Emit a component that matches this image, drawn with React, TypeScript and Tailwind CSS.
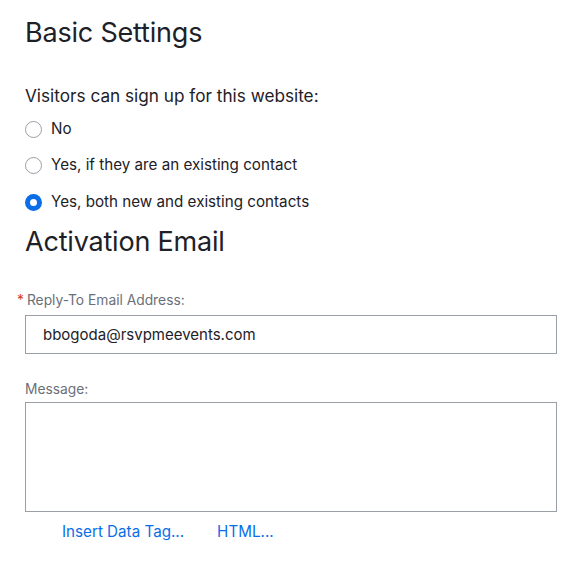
import { useState } from 'react'

const options = [
  'No',
  'Yes, if they are an existing contact',
  'Yes, both new and existing contacts',
]

export default function App() {
  const [signup, setSignup] = useState(2)
  const [email, setEmail] = useState('bbogoda@rsvpmeevents.com')

  return (
    <div className="min-h-screen bg-white px-[25px] pt-[14px] text-[#1d2127] font-['Inter',sans-serif]">
      <h2 className="text-[27px] leading-[38px] tracking-[-0.2px]">Basic Settings</h2>

      <div className="mt-[32px] text-[17.2px] leading-[24px]">Visitors can sign up for this website:</div>

      <div className="mt-[3px] flex flex-col">
        {options.map((label, i) => (
          <label key={i} className="flex h-[36.5px] cursor-pointer items-center gap-[9px] text-[15.2px]">
            <span
              className={
                i === signup
                  ? 'h-[17px] w-[17px] rounded-full border-[5px] border-[#0a6ee8] bg-white'
                  : 'h-[17px] w-[17px] rounded-full border border-[#9aa0a8] bg-white'
              }
              onClick={() => setSignup(i)}
            />
            <span>{label}</span>
          </label>
        ))}
      </div>

      <h2 className="mt-[2px] text-[27px] leading-[38px] tracking-[-0.2px]">Activation Email</h2>

      <div className="mt-[29px] flex items-center text-[13.8px] text-[#6b7079]">
        <span className="-ml-[8px] mr-[3px] text-[#d93a12]">*</span>
        Reply-To Email Address:
      </div>
      <input
        value={email}
        onChange={(e) => setEmail(e.target.value)}
        className="mt-[5px] block h-[39px] w-[532px] border border-[#9ba0a7] px-[17px] text-[15px] text-[#1d2127] outline-none"
      />

      <div className="mt-[25px] text-[13.8px] text-[#6b7079]">Message:</div>
      <textarea className="mt-[2px] block h-[110px] w-[532px] resize-none border border-[#9ba0a7] p-2 outline-none" />

      <div className="mt-[9px] flex gap-[33px] pl-[37px] text-[15.2px] text-[#0a6ee8]">
        <a href="#">Insert Data Tag...</a>
        <a href="#">HTML...</a>
      </div>
    </div>
  )
}
